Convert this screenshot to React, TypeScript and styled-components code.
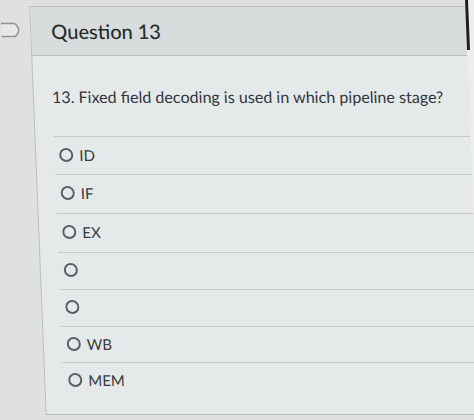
import styled, { createGlobalStyle } from "styled-components";

const GlobalStyle = createGlobalStyle`
  html, body {
    margin: 0;
    padding: 0;
    background: #dfe1e0;
    overflow: hidden;
  }
`;

// row heights shrink a little toward the bottom, as in the photo
const answers = [
  { label: "ID", h: 38 },
  { label: "IF", h: 39 },
  { label: "EX", h: 39 },
  { label: "", h: 37 },
  { label: "", h: 37 },
  { label: "WB", h: 36 },
  { label: "MEM", h: 36 },
];

const App = () => {
  return (
    <>
      <GlobalStyle />
      <Page>
        <Gutter>
          <svg width="19" height="16" viewBox="0 0 19 16" fill="none">
            <path
              d="M-2 1.5H13C15 1.5 17.5 6 17.5 8C17.5 10 15 14.5 13 14.5H-2Z"
              fill="#e6e8e8"
              stroke="#8e9293"
              strokeWidth="1.4"
            />
          </svg>
        </Gutter>
        <Card>
          <Header>
            <h2>Question 13</h2>
          </Header>
          <Body>
            <QuestionText>
              13. Fixed field decoding is used in which pipeline stage?
            </QuestionText>
            <AnswerList>
              {answers.map((a, i) => (
                <AnswerRow key={i} $h={a.h}>
                  <Radio />
                  <span>{a.label}</span>
                </AnswerRow>
              ))}
            </AnswerList>
          </Body>
        </Card>
        <RightEdge>
          <DarkBar />
        </RightEdge>
      </Page>
    </>
  );
};

export default App;

const Page = styled.div`
  display: flex;
  width: 474px;
  height: 440px;
  font-family: "Lato", "Liberation Sans", sans-serif;
  color: #2d3439;
  transform: skewX(2.3deg);
  transform-origin: top left;
`;

const Gutter = styled.div`
  width: 29px;
  flex-shrink: 0;
  padding-top: 22px;
  box-sizing: border-box;
  display: flex;
  flex-direction: column;
  align-items: flex-start;
`;

const Card = styled.div`
  flex: 1;
  margin-top: 6px;
  height: 409px;
  box-sizing: border-box;
  border: 1px solid #b9bdbe;
  border-right: none;
  display: flex;
  flex-direction: column;
  background: #e6e9e9;
`;

const Header = styled.div`
  height: 49px;
  box-sizing: border-box;
  background: #d9dcdc;
  border-bottom: 1px solid #bcc0c1;
  display: flex;
  align-items: center;
  padding-left: 20px;

  h2 {
    margin: 0;
    font-size: 20px;
    font-weight: 500;
    color: #262d31;
  }
`;

const Body = styled.div`
  flex: 1;
  padding-left: 18px;
  display: flex;
  flex-direction: column;
`;

const QuestionText = styled.p`
  margin: 0;
  height: 80px;
  display: flex;
  align-items: center;
  box-sizing: border-box;
  font-size: 16.1px;
  color: #30373c;
`;

const AnswerList = styled.div`
  display: flex;
  flex-direction: column;
`;

const AnswerRow = styled.div<{ $h: number }>`
  height: ${(p) => p.$h}px;
  box-sizing: border-box;
  border-top: 1px solid #c6cacb;
  display: flex;
  align-items: center;
  gap: 6px;
  padding-left: 5px;
  padding-bottom: 2px;
  font-size: 15px;
  color: #353c41;
`;

const Radio = styled.span`
  width: 14px;
  height: 14px;
  box-sizing: border-box;
  border: 2px solid #5b6064;
  border-radius: 50%;
  flex-shrink: 0;
`;

const RightEdge = styled.div`
  width: 9px;
  flex-shrink: 0;
  background: #eceeee;
`;

const DarkBar = styled.div`
  width: 3px;
  height: 50px;
  background: #1e1f20;
`;
